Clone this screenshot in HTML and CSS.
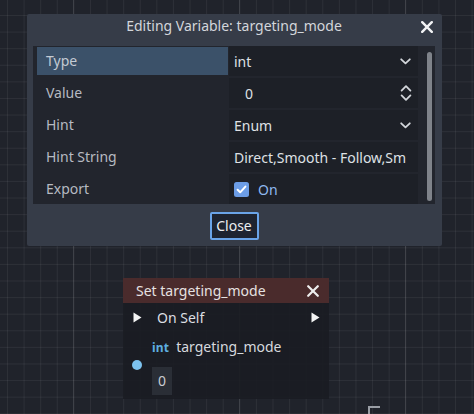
FILE: index.html
```html
<!DOCTYPE html>
<html lang="en">
<head>
<meta charset="utf-8">
<title>Editing Variable</title>
<link rel="stylesheet" href="styles.css">
</head>
<body>
<div class="canvas">

  <section class="dialog">
    <header class="dialog-title">
      <span class="title-text">Editing Variable: targeting_mode</span>
      <button class="icon-btn close-x" aria-label="Close">
        <svg width="12" height="12" viewBox="0 0 12 12"><path d="M1.2 1.2 L10.8 10.8 M10.8 1.2 L1.2 10.8" stroke="#f2f3f5" stroke-width="2.4" stroke-linecap="round"/></svg>
      </button>
    </header>

    <div class="inspector">
      <div class="rows">
        <div class="row selected">
          <span class="label">Type</span>
          <div class="field">
            <span class="value">int</span>
            <svg class="chevron" width="11" height="7" viewBox="0 0 11 7"><path d="M1.2 1.3 L5.5 5.4 L9.8 1.3" fill="none" stroke="#d3d6db" stroke-width="1.8" stroke-linecap="round" stroke-linejoin="round"/></svg>
          </div>
        </div>
        <div class="row">
          <span class="label">Value</span>
          <div class="field">
            <span class="value num">0</span>
            <svg class="spinner" width="12" height="18" viewBox="0 0 12 18"><path d="M1.6 6.6 L6 2.2 L10.4 6.6 M1.6 11.4 L6 15.8 L10.4 11.4" fill="none" stroke="#d3d6db" stroke-width="1.8" stroke-linecap="round" stroke-linejoin="round"/></svg>
          </div>
        </div>
        <div class="row">
          <span class="label">Hint</span>
          <div class="field">
            <span class="value">Enum</span>
            <svg class="chevron" width="11" height="7" viewBox="0 0 11 7"><path d="M1.2 1.3 L5.5 5.4 L9.8 1.3" fill="none" stroke="#d3d6db" stroke-width="1.8" stroke-linecap="round" stroke-linejoin="round"/></svg>
          </div>
        </div>
        <div class="row">
          <span class="label">Hint String</span>
          <div class="field">
            <span class="value">Direct,Smooth - Follow,Sm</span>
          </div>
        </div>
        <div class="row">
          <span class="label">Export</span>
          <div class="field">
            <span class="checkbox">
              <svg width="15" height="15" viewBox="0 0 15 15"><rect x="0" y="0" width="15" height="15" rx="2.5" fill="#6c9de6"/><path d="M3.6 7.8 L6.2 10.3 L11.4 4.6" fill="none" stroke="#ffffff" stroke-width="2" stroke-linecap="round" stroke-linejoin="round"/></svg>
            </span>
            <span class="check-text">On</span>
          </div>
        </div>
      </div>
      <div class="scrollbar"></div>
    </div>

    <footer class="dialog-footer">
      <button class="close-btn">Close</button>
    </footer>
  </section>

  <div class="graph-node">
    <div class="node-header">
      <span class="node-title">Set targeting_mode</span>
      <svg width="12" height="12" viewBox="0 0 12 12"><path d="M1.2 1.2 L10.8 10.8 M10.8 1.2 L1.2 10.8" stroke="#eeeeee" stroke-width="2.2" stroke-linecap="round"/></svg>
    </div>
    <div class="node-body">
      <div class="exec-row">
        <svg class="exec-pin" width="9" height="11" viewBox="0 0 9 11"><path d="M0.5 0.5 L8.5 5.5 L0.5 10.5 Z" fill="#f4f4f4"/></svg>
        <span class="exec-label">On Self</span>
        <svg class="exec-pin" width="9" height="11" viewBox="0 0 9 11"><path d="M0.5 0.5 L8.5 5.5 L0.5 10.5 Z" fill="#f4f4f4"/></svg>
      </div>
      <div class="data-row">
        <span class="data-pin"></span>
        <div class="data-content">
          <div class="pin-label"><span class="type-tag">int</span><span>targeting_mode</span></div>
          <span class="value-box">0</span>
        </div>
      </div>
    </div>
  </div>

  <div class="selection-corner"></div>
</div>
</body>
</html>
```

FILE: styles.css
```css
* { box-sizing: border-box; }

html, body { margin: 0; padding: 0; }

body {
  width: 474px;
  height: 414px;
  overflow: hidden;
  font-family: "Noto Sans", "Open Sans", sans-serif;
  font-size: 14px;
  line-height: 19px;
  color: #d8dadf;
  background:
    linear-gradient(to right, rgba(255,255,255,0.1) 1px, transparent 1px) 73px 0 / 166px 100%,
    linear-gradient(to right, rgba(255,255,255,0.06) 1px, transparent 1px) 7px 0 / 16.6px 100%,
    linear-gradient(to bottom, rgba(255,255,255,0.06) 1px, transparent 1px) 0 15px / 100% 16.6px,
    #20232b;
}

.canvas {
  position: relative;
  width: 474px;
  height: 414px;
}

button {
  font: inherit;
  color: inherit;
  background: none;
  border: 0;
  padding: 0;
}

/* ---------- variable dialog ---------- */
.dialog {
  position: absolute;
  left: 27px;
  top: 14px;
  width: 415px;
  height: 232px;
  display: flex;
  flex-direction: column;
  padding: 0 7px 0 6px;
  background: #363c48;
  border-radius: 2px;
}

.dialog-title {
  height: 32px;
  display: grid;
  grid-template-columns: 1fr auto 1fr;
  align-items: start;
  padding-top: 2px;
}

.title-text {
  grid-column: 2;
  color: #d3d6db;
  white-space: nowrap;
}

.close-x {
  grid-column: 3;
  justify-self: end;
  width: 12px;
  height: 12px;
  margin-top: 5px;
  margin-right: 2px;
  display: block;
}
.close-x svg { display: block; }

.inspector {
  height: 158px;
  display: flex;
  padding: 0 0 0 4px;
  background: #22252d;
}

.rows {
  width: 381px;
  display: flex;
  flex-direction: column;
  gap: 2px;
}

.row {
  height: 30px;
  display: grid;
  grid-template-columns: 191px 1fr;
  column-gap: 1px;
}

.label {
  padding-left: 9px;
  line-height: 30px;
  color: #b6bac1;
  white-space: nowrap;
}

.row.selected .label {
  margin: 1px 0;
  line-height: 28px;
  background: #3b5169;
  color: #c3cad3;
}

.field {
  display: flex;
  align-items: center;
  padding: 0 6px 0 5px;
  background: #1d2027;
  min-width: 0;
  overflow: hidden;
}

.value {
  flex: 1;
  color: #dfe1e5;
  white-space: nowrap;
}
.value.num { padding-left: 11px; }

.chevron { flex: none; margin-right: 1px; }
.spinner { flex: none; }

.checkbox { display: flex; flex: none; }
.checkbox svg { display: block; }

.check-text {
  margin-left: 9px;
  color: #8fb8ef;
}

.scrollbar {
  width: 5px;
  margin: 6px 3px 3px auto;
  border-radius: 3px;
  background: #7f838a;
}

.dialog-footer {
  flex: 1;
  display: flex;
  justify-content: center;
  padding-top: 8px;
}

.close-btn {
  width: 49px;
  height: 28px;
  border: 2px solid #6aa4e8;
  border-radius: 2px;
  background: #1e2430;
  color: #eceef1;
  line-height: 22px;
  text-align: center;
}

/* ---------- graph node ---------- */
.graph-node {
  position: absolute;
  left: 123px;
  top: 278px;
  width: 206px;
}

.node-header {
  height: 25px;
  display: flex;
  align-items: center;
  justify-content: space-between;
  padding: 0 10px 0 13px;
  background: #4a2b2c;
  color: #e6e1e1;
}
.node-header svg { display: block; }

.node-body {
  height: 96px;
  background: rgba(26, 28, 35, 0.92);
}

.exec-row {
  height: 29px;
  display: flex;
  align-items: center;
  padding: 0 9px 0 10px;
}
.exec-pin { display: block; flex: none; }
.exec-label {
  flex: 1;
  margin-left: 15px;
  color: #dcdee2;
}

.data-row {
  height: 67px;
  display: flex;
  align-items: center;
  padding-left: 9px;
}

.data-pin {
  width: 10px;
  height: 10px;
  margin-bottom: 2px;
  border-radius: 50%;
  background: #7dc2ee;
  flex: none;
}

.data-content {
  align-self: flex-start;
  margin-left: 10px;
  padding-top: 5px;
  display: flex;
  flex-direction: column;
  align-items: flex-start;
}

.pin-label {
  display: flex;
  align-items: baseline;
  gap: 7px;
  color: #d6d9de;
}

.type-tag {
  font-size: 12px;
  font-weight: 700;
  color: #5eaee0;
  letter-spacing: 0.2px;
}

.value-box {
  margin-top: 10px;
  width: 20px;
  height: 28px;
  line-height: 28px;
  text-align: center;
  background: #2a2e36;
  color: #c9ccd1;
}

/* partial selection frame at the canvas edge */
.selection-corner {
  position: absolute;
  left: 368px;
  top: 406px;
  width: 12px;
  height: 10px;
  border-top: 2px solid #9a9ea5;
  border-left: 2px solid #9a9ea5;
}
```
